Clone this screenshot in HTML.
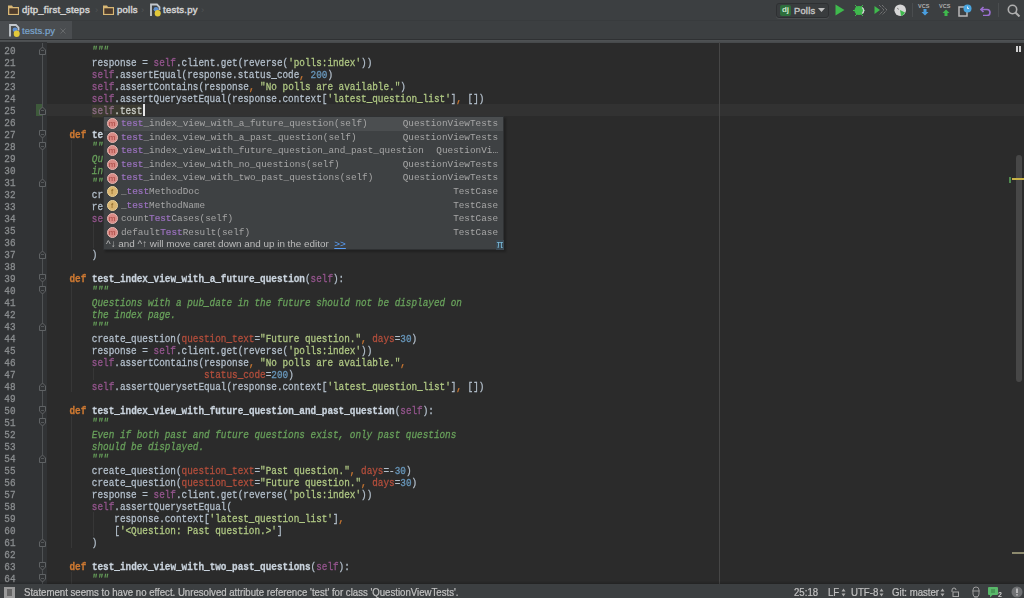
<!DOCTYPE html>
<html><head><meta charset="utf-8">
<style>
*{margin:0;padding:0;box-sizing:border-box}
html,body{width:1024px;height:598px;overflow:hidden;background:#2b2b2b;font-family:"Liberation Sans",sans-serif}
.abs{position:absolute}
#top{position:absolute;left:0;top:0;width:1024px;height:20px;background:#3c3f41}
#topline{position:absolute;left:0;top:20px;width:1024px;height:1px;background:#383b3d}
#tabs{position:absolute;left:0;top:21px;width:1024px;height:19px;background:#3c3f41}
#tabact{position:absolute;left:0;top:21px;width:72px;height:19px;background:#4a4d50}
#tabline1{position:absolute;left:0;top:39px;width:1024px;height:1px;background:#2f3133}
#tabline2{position:absolute;left:0;top:40px;width:1024px;height:3px;background:linear-gradient(#515456,#45484a)}
.bc{position:absolute;top:3px;font-size:9.5px;letter-spacing:0.25px;color:#cfcfcf;line-height:14px;-webkit-text-stroke:0.5px #cfcfcf}
#editor{position:absolute;left:0;top:42px;width:1024px;height:543px;background:#2b2b2b;overflow:hidden}
#gutter{position:absolute;left:0;top:42px;width:47px;height:543px;background:#313335}
#margin{position:absolute;left:719px;top:42px;width:1px;height:543px;background:#464646}
.l{position:absolute;left:47px;height:12px;line-height:12px;font-family:"Liberation Mono",monospace;font-size:9.35px;color:#b3bfcb;white-space:pre;transform:scaleY(1.15);transform-origin:0 8px;-webkit-text-stroke-width:0.25px}
.nm{position:absolute;left:0;width:15.5px;text-align:right;height:12px;line-height:12px;font-family:"Liberation Mono",monospace;font-size:9.35px;color:#8a8d8f;white-space:pre;-webkit-text-stroke:0.25px #8a8d8f;transform:scaleY(1.15);transform-origin:0 8px}
i{font-style:normal}
i.k{color:#cc7832;font-weight:bold}
i.c{color:#cc7832}
i.s{color:#94558d}
i.t{color:#afc783}
i.d{color:#68a05b;font-style:italic}
i.n{color:#6897bb}
i.kw{color:#b24e3c}
i.w{background:#3b3a30;color:#c9ccc6}
i.sw{color:#8d6d86}
i.f{color:#c9d3dd;font-weight:bold}
#curline{position:absolute;left:47px;top:104px;width:977px;height:12px;background:#323232}
#status{position:absolute;left:0;top:584px;width:1024px;height:14px;background:#3c3f41}
.st{position:absolute;top:586.5px;font-size:9.65px;line-height:12px;color:#c0c0c0;transform:scaleY(1.12);transform-origin:0 9px;-webkit-text-stroke:0.2px #c0c0c0}
#popup{position:absolute;left:103px;top:116px;width:401px;height:134px;background:#3e4143;border:1px solid #2f3133;box-shadow:2px 2px 2px rgba(0,0,0,0.25)}
.pr{position:absolute;left:0;width:399px;height:13.6px;font-family:"Liberation Mono",monospace;font-size:9.35px;line-height:13.6px;color:#a6a6a6;white-space:pre}
.pr .ic{position:absolute;left:2.5px;top:1.3px;width:11px;height:11px;border-radius:50%;background:#d98a85;border:1px solid #e9b7b2;color:#a8443f;font-size:8px;line-height:9px;text-align:center;font-family:"Liberation Sans",sans-serif}
.pr .ic.fld{background:#d9b46f;border-color:#ecd39a;color:#8b6424}
.pr .nmx{position:absolute;left:17px}
.pr .ty{position:absolute;right:5px}
.pr b{color:#9c72c0;font-weight:normal;-webkit-text-stroke:0.2px #9c72c0}
#root{position:absolute;left:0;top:0;width:1024px;height:598px;filter:blur(0.35px)}
</style></head><body><div id="root">
<div id="top"></div>
<div id="topline"></div>
<div id="tabs"></div>
<div id="tabact"></div>
<div id="tabline1"></div>
<div id="tabline2"></div>

<!-- breadcrumbs -->
<svg class="abs" style="left:7px;top:4px" width="13" height="12" viewBox="0 0 13 12"><path d="M1 1.5h4l1 1.5h6v8H1z" fill="#d8b775"/><rect x="2.3" y="4.3" width="8.6" height="5.6" fill="#4d3b2c"/></svg>
<div class="bc" style="left:22px">djtp_first_steps</div>
<div class="bc" style="left:95px;color:#505355;-webkit-text-stroke:0;font-weight:normal">&rsaquo;</div>
<svg class="abs" style="left:102px;top:4px" width="13" height="12" viewBox="0 0 13 12"><path d="M1 1.5h4l1 1.5h6v8H1z" fill="#d8b775"/><rect x="2.3" y="4.3" width="8.6" height="5.6" fill="#4d3b2c"/></svg>
<div class="bc" style="left:117px">polls</div>
<div class="bc" style="left:141px;color:#505355;-webkit-text-stroke:0;font-weight:normal">&rsaquo;</div>
<svg class="abs" style="left:149px;top:3px" width="13" height="14" viewBox="0 0 13 14"><path d="M2 13V1.5h6l2.5 2.5v3" fill="none" stroke="#c3c8cd" stroke-width="1.8"/><ellipse cx="7" cy="6.3" rx="2.4" ry="2.2" fill="#5d8fd0"/><ellipse cx="8.7" cy="10.2" rx="3" ry="3.2" fill="#e3c93a"/></svg>
<div class="bc" style="left:163px">tests.py</div>
<div class="bc" style="left:201px;color:#505355;-webkit-text-stroke:0;font-weight:normal">&rsaquo;</div>

<!-- toolbar right -->
<div class="abs" style="left:776px;top:3px;width:53px;height:15px;border:1px solid #2e3032;border-radius:3px;background:#393c3e;box-shadow:0 1px 0 #4b4e50"></div>
<div class="abs" style="left:780px;top:5px;width:11px;height:11px;background:#2e6e3c;border-radius:2px;color:#cfe6cf;font-size:8px;line-height:10px;font-weight:bold;text-align:center">dj</div>
<div class="bc" style="left:794px;top:4px;font-size:9.3px;color:#c4c4c4;-webkit-text-stroke:0.4px #c4c4c4">Polls</div>
<svg class="abs" style="left:818px;top:8px" width="8" height="5"><path d="M0 0h7l-3.5 4z" fill="#c0c0c0"/></svg>
<svg class="abs" style="left:835px;top:4px" width="10" height="12"><path d="M0.5 0.5L9.5 6L0.5 11.5z" fill="#3fb94d"/></svg>
<svg class="abs" style="left:853px;top:4px" width="14" height="13"><circle cx="6" cy="6.5" r="4.5" fill="#3fb94d"/><path d="M2 1l2 2M10 1L8 3M0 6.5h2M10 6.5h2M2 12l2-2M10 12l-2-2" stroke="#3fb94d" stroke-width="1"/><path d="M9 3.5a3.5 3.5 0 0 1 0 6" stroke="#d0d0d0" stroke-width="1.4" fill="none"/></svg>
<svg class="abs" style="left:874px;top:4px" width="13" height="12"><path d="M0.5 2L6 6L0.5 10z" fill="#3fb94d"/><path d="M5 1l5 5l-5 5M8 1l5 5l-5 5" stroke="#8a8a8a" stroke-width="1" fill="none" stroke-dasharray="1 1"/></svg>
<svg class="abs" style="left:894px;top:4px" width="13" height="13"><circle cx="6.2" cy="6.2" r="5.8" fill="#d6d6d6"/><path d="M6 6l5 2.5a5.8 5.8 0 0 1-4 3.5z" fill="#3fb94d"/><path d="M3 4l2 1.5" stroke="#888" stroke-width="1"/></svg>
<div class="abs" style="left:912px;top:3px;width:1px;height:14px;background:#4a4d4f"></div>
<div class="abs" style="left:918px;top:3px;font-size:5.5px;font-weight:bold;color:#b0b0b0;line-height:6px">VCS</div>
<svg class="abs" style="left:921px;top:9px" width="8" height="7"><path d="M2.5 0h3v3h2l-3.5 3.5l-3.5-3.5h2z" fill="#4a9fe0"/></svg>
<div class="abs" style="left:939px;top:3px;font-size:5.5px;font-weight:bold;color:#b0b0b0;line-height:6px">VCS</div>
<svg class="abs" style="left:942px;top:9px" width="8" height="7"><path d="M2.5 7h3v-3h2l-3.5-3.5l-3.5 3.5h2z" fill="#3fb94d"/></svg>
<svg class="abs" style="left:958px;top:4px" width="14" height="13"><rect x="1" y="3" width="8" height="9" fill="none" stroke="#b8b8b8" stroke-width="1.5"/><circle cx="9.5" cy="4.5" r="4" fill="#4aa6e0"/><path d="M9.5 2.5v2h1.5" stroke="#fff" stroke-width="0.8" fill="none"/></svg>
<svg class="abs" style="left:980px;top:6px" width="12" height="10"><path d="M3.5 1L1 3.5l2.5 2.5" stroke="#9b6fd0" stroke-width="1.6" fill="none"/><path d="M1.5 3.5H7a3 3 0 0 1 0 6H3" stroke="#9b6fd0" stroke-width="1.6" fill="none"/></svg>
<div class="abs" style="left:998px;top:3px;width:1px;height:14px;background:#4a4d4f"></div>
<svg class="abs" style="left:1007px;top:4px" width="14" height="13"><circle cx="5.5" cy="5.5" r="4.2" stroke="#b0b0b0" stroke-width="1.6" fill="none"/><path d="M8.5 8.5l4 4" stroke="#b0b0b0" stroke-width="2"/></svg>

<!-- tab -->
<svg class="abs" style="left:8px;top:23px" width="13" height="15" viewBox="0 0 13 14"><path d="M2 13V1.5h6l2.5 2.5v3" fill="none" stroke="#c3c8cd" stroke-width="1.8"/><ellipse cx="7" cy="6.3" rx="2.4" ry="2.2" fill="#5d8fd0"/><ellipse cx="8.7" cy="10.2" rx="3" ry="3.2" fill="#e3c93a"/></svg>
<div class="abs" style="left:22px;top:23.5px;font-size:9.5px;letter-spacing:0.05px;line-height:14px;color:#7ba6cf;-webkit-text-stroke:0.2px #7ba6cf">tests.py</div>
<svg class="abs" style="left:60px;top:28px" width="6" height="6"><path d="M0.5 0.5l5 5M5.5 0.5l-5 5" stroke="#66696b" stroke-width="1"/></svg>

<!-- editor -->
<div id="gutter"></div>
<div id="curline"></div>

<div id="margin"></div>
<div class="abs" style="left:36px;top:104px;width:6px;height:12px;background:#3e5a3b"></div>
<div class="abs" style="left:42px;top:43px;width:1px;height:542px;background:#4f5254"></div>
<div class="abs" style="left:71px;top:140px;width:1px;height:120px;background:#373737"></div>
<div class="abs" style="left:71px;top:284px;width:1px;height:108px;background:#373737"></div>
<div class="abs" style="left:71px;top:416px;width:1px;height:132px;background:#373737"></div>
<div class="abs" style="left:71px;top:572px;width:1px;height:12px;background:#373737"></div>
<div class="abs" style="left:93px;top:224px;width:1px;height:24px;background:#373737"></div>
<div class="abs" style="left:93px;top:368px;width:1px;height:12px;background:#373737"></div>
<div class="abs" style="left:93px;top:512px;width:1px;height:24px;background:#373737"></div>
<svg class="abs" style="left:37px;top:44px" width="10" height="12"><path d="M2.5 10.5h6v-4.5l-3-3l-3 3z" fill="#313335" stroke="#5f6264" stroke-width="1"/><path d="M4 6.5h3" stroke="#55585a" stroke-width="1"/></svg>
<svg class="abs" style="left:37px;top:104px" width="10" height="12"><path d="M2.5 10.5h6v-4.5l-3-3l-3 3z" fill="#313335" stroke="#5f6264" stroke-width="1"/><path d="M4 6.5h3" stroke="#55585a" stroke-width="1"/></svg>
<svg class="abs" style="left:37px;top:128px" width="10" height="12"><path d="M2.5 2.5h6v4.5l-3 3l-3-3z" fill="#313335" stroke="#5f6264" stroke-width="1"/><path d="M4 6.5h3" stroke="#55585a" stroke-width="1"/></svg>
<svg class="abs" style="left:37px;top:140px" width="10" height="12"><path d="M2.5 2.5h6v4.5l-3 3l-3-3z" fill="#313335" stroke="#5f6264" stroke-width="1"/><path d="M4 6.5h3" stroke="#55585a" stroke-width="1"/></svg>
<svg class="abs" style="left:37px;top:176px" width="10" height="12"><path d="M2.5 10.5h6v-4.5l-3-3l-3 3z" fill="#313335" stroke="#5f6264" stroke-width="1"/><path d="M4 6.5h3" stroke="#55585a" stroke-width="1"/></svg>
<svg class="abs" style="left:37px;top:248px" width="10" height="12"><path d="M2.5 10.5h6v-4.5l-3-3l-3 3z" fill="#313335" stroke="#5f6264" stroke-width="1"/><path d="M4 6.5h3" stroke="#55585a" stroke-width="1"/></svg>
<svg class="abs" style="left:37px;top:272px" width="10" height="12"><path d="M2.5 2.5h6v4.5l-3 3l-3-3z" fill="#313335" stroke="#5f6264" stroke-width="1"/><path d="M4 6.5h3" stroke="#55585a" stroke-width="1"/></svg>
<svg class="abs" style="left:37px;top:284px" width="10" height="12"><path d="M2.5 2.5h6v4.5l-3 3l-3-3z" fill="#313335" stroke="#5f6264" stroke-width="1"/><path d="M4 6.5h3" stroke="#55585a" stroke-width="1"/></svg>
<svg class="abs" style="left:37px;top:320px" width="10" height="12"><path d="M2.5 10.5h6v-4.5l-3-3l-3 3z" fill="#313335" stroke="#5f6264" stroke-width="1"/><path d="M4 6.5h3" stroke="#55585a" stroke-width="1"/></svg>
<svg class="abs" style="left:37px;top:380px" width="10" height="12"><path d="M2.5 10.5h6v-4.5l-3-3l-3 3z" fill="#313335" stroke="#5f6264" stroke-width="1"/><path d="M4 6.5h3" stroke="#55585a" stroke-width="1"/></svg>
<svg class="abs" style="left:37px;top:404px" width="10" height="12"><path d="M2.5 2.5h6v4.5l-3 3l-3-3z" fill="#313335" stroke="#5f6264" stroke-width="1"/><path d="M4 6.5h3" stroke="#55585a" stroke-width="1"/></svg>
<svg class="abs" style="left:37px;top:416px" width="10" height="12"><path d="M2.5 2.5h6v4.5l-3 3l-3-3z" fill="#313335" stroke="#5f6264" stroke-width="1"/><path d="M4 6.5h3" stroke="#55585a" stroke-width="1"/></svg>
<svg class="abs" style="left:37px;top:452px" width="10" height="12"><path d="M2.5 10.5h6v-4.5l-3-3l-3 3z" fill="#313335" stroke="#5f6264" stroke-width="1"/><path d="M4 6.5h3" stroke="#55585a" stroke-width="1"/></svg>
<svg class="abs" style="left:37px;top:536px" width="10" height="12"><path d="M2.5 10.5h6v-4.5l-3-3l-3 3z" fill="#313335" stroke="#5f6264" stroke-width="1"/><path d="M4 6.5h3" stroke="#55585a" stroke-width="1"/></svg>
<svg class="abs" style="left:37px;top:560px" width="10" height="12"><path d="M2.5 2.5h6v4.5l-3 3l-3-3z" fill="#313335" stroke="#5f6264" stroke-width="1"/><path d="M4 6.5h3" stroke="#55585a" stroke-width="1"/></svg>
<svg class="abs" style="left:37px;top:572px" width="10" height="12"><path d="M2.5 2.5h6v4.5l-3 3l-3-3z" fill="#313335" stroke="#5f6264" stroke-width="1"/><path d="M4 6.5h3" stroke="#55585a" stroke-width="1"/></svg>
<div class="nm" style="top:46px">20</div>
<div class="nm" style="top:58px">21</div>
<div class="nm" style="top:70px">22</div>
<div class="nm" style="top:82px">23</div>
<div class="nm" style="top:94px">24</div>
<div class="nm" style="top:106px">25</div>
<div class="nm" style="top:118px">26</div>
<div class="nm" style="top:130px">27</div>
<div class="nm" style="top:142px">28</div>
<div class="nm" style="top:154px">29</div>
<div class="nm" style="top:166px">30</div>
<div class="nm" style="top:178px">31</div>
<div class="nm" style="top:190px">32</div>
<div class="nm" style="top:202px">33</div>
<div class="nm" style="top:214px">34</div>
<div class="nm" style="top:226px">35</div>
<div class="nm" style="top:238px">36</div>
<div class="nm" style="top:250px">37</div>
<div class="nm" style="top:262px">38</div>
<div class="nm" style="top:274px">39</div>
<div class="nm" style="top:286px">40</div>
<div class="nm" style="top:298px">41</div>
<div class="nm" style="top:310px">42</div>
<div class="nm" style="top:322px">43</div>
<div class="nm" style="top:334px">44</div>
<div class="nm" style="top:346px">45</div>
<div class="nm" style="top:358px">46</div>
<div class="nm" style="top:370px">47</div>
<div class="nm" style="top:382px">48</div>
<div class="nm" style="top:394px">49</div>
<div class="nm" style="top:406px">50</div>
<div class="nm" style="top:418px">51</div>
<div class="nm" style="top:430px">52</div>
<div class="nm" style="top:442px">53</div>
<div class="nm" style="top:454px">54</div>
<div class="nm" style="top:466px">55</div>
<div class="nm" style="top:478px">56</div>
<div class="nm" style="top:490px">57</div>
<div class="nm" style="top:502px">58</div>
<div class="nm" style="top:514px">59</div>
<div class="nm" style="top:526px">60</div>
<div class="nm" style="top:538px">61</div>
<div class="nm" style="top:550px">62</div>
<div class="nm" style="top:562px">63</div>
<div class="nm" style="top:574px">64</div>
<div class="l" style="top:46px">        <i class="d">"""</i></div>
<div class="l" style="top:58px">        response = <i class="s">self</i>.client.get(reverse(<i class="t">'polls:index'</i>))</div>
<div class="l" style="top:70px">        <i class="s">self</i>.assertEqual(response.status_code<i class="c">,</i> <i class="n">200</i>)</div>
<div class="l" style="top:82px">        <i class="s">self</i>.assertContains(response<i class="c">,</i> <i class="t">"No polls are available."</i>)</div>
<div class="l" style="top:94px">        <i class="s">self</i>.assertQuerysetEqual(response.context[<i class="t">'latest_question_list'</i>]<i class="c">,</i> [])</div>
<div class="l" style="top:106px">        <i class="w"><i class="sw">self</i>.test</i></div>
<div class="l" style="top:118px"></div>
<div class="l" style="top:130px">    <i class="k">def</i> <i class="f">test_index_view_with_a_past_question</i>(<i class="s">self</i>):</div>
<div class="l" style="top:142px">        <i class="d">"""</i></div>
<div class="l" style="top:154px">        <i class="d">Questions with a pub_date in the past should be displayed on the</i></div>
<div class="l" style="top:166px">        <i class="d">index page.</i></div>
<div class="l" style="top:178px">        <i class="d">"""</i></div>
<div class="l" style="top:190px">        create_question(<i class="kw">question_text</i>=<i class="t">"Past question."</i><i class="c">,</i> <i class="kw">days</i>=-<i class="n">30</i>)</div>
<div class="l" style="top:202px">        response = <i class="s">self</i>.client.get(reverse(<i class="t">'polls:index'</i>))</div>
<div class="l" style="top:214px">        <i class="s">self</i>.assertQuerysetEqual(</div>
<div class="l" style="top:226px">            response.context[<i class="t">'latest_question_list'</i>]<i class="c">,</i></div>
<div class="l" style="top:238px">            [<i class="t">'&lt;Question: Past question.&gt;'</i>]</div>
<div class="l" style="top:250px">        )</div>
<div class="l" style="top:262px"></div>
<div class="l" style="top:274px">    <i class="k">def</i> <i class="f">test_index_view_with_a_future_question</i>(<i class="s">self</i>):</div>
<div class="l" style="top:286px">        <i class="d">"""</i></div>
<div class="l" style="top:298px">        <i class="d">Questions with a pub_date in the future should not be displayed on</i></div>
<div class="l" style="top:310px">        <i class="d">the index page.</i></div>
<div class="l" style="top:322px">        <i class="d">"""</i></div>
<div class="l" style="top:334px">        create_question(<i class="kw">question_text</i>=<i class="t">"Future question."</i><i class="c">,</i> <i class="kw">days</i>=<i class="n">30</i>)</div>
<div class="l" style="top:346px">        response = <i class="s">self</i>.client.get(reverse(<i class="t">'polls:index'</i>))</div>
<div class="l" style="top:358px">        <i class="s">self</i>.assertContains(response<i class="c">,</i> <i class="t">"No polls are available."</i><i class="c">,</i></div>
<div class="l" style="top:370px">                            <i class="kw">status_code</i>=<i class="n">200</i>)</div>
<div class="l" style="top:382px">        <i class="s">self</i>.assertQuerysetEqual(response.context[<i class="t">'latest_question_list'</i>]<i class="c">,</i> [])</div>
<div class="l" style="top:394px"></div>
<div class="l" style="top:406px">    <i class="k">def</i> <i class="f">test_index_view_with_future_question_and_past_question</i>(<i class="s">self</i>):</div>
<div class="l" style="top:418px">        <i class="d">"""</i></div>
<div class="l" style="top:430px">        <i class="d">Even if both past and future questions exist, only past questions</i></div>
<div class="l" style="top:442px">        <i class="d">should be displayed.</i></div>
<div class="l" style="top:454px">        <i class="d">"""</i></div>
<div class="l" style="top:466px">        create_question(<i class="kw">question_text</i>=<i class="t">"Past question."</i><i class="c">,</i> <i class="kw">days</i>=-<i class="n">30</i>)</div>
<div class="l" style="top:478px">        create_question(<i class="kw">question_text</i>=<i class="t">"Future question."</i><i class="c">,</i> <i class="kw">days</i>=<i class="n">30</i>)</div>
<div class="l" style="top:490px">        response = <i class="s">self</i>.client.get(reverse(<i class="t">'polls:index'</i>))</div>
<div class="l" style="top:502px">        <i class="s">self</i>.assertQuerysetEqual(</div>
<div class="l" style="top:514px">            response.context[<i class="t">'latest_question_list'</i>]<i class="c">,</i></div>
<div class="l" style="top:526px">            [<i class="t">'&lt;Question: Past question.&gt;'</i>]</div>
<div class="l" style="top:538px">        )</div>
<div class="l" style="top:550px"></div>
<div class="l" style="top:562px">    <i class="k">def</i> <i class="f">test_index_view_with_two_past_questions</i>(<i class="s">self</i>):</div>
<div class="l" style="top:574px">        <i class="d">"""</i></div>

<div class="abs" style="left:143px;top:104px;width:1.5px;height:12px;background:#e6e6e6"></div>
<!-- popup -->
<div id="popup">
<div class="pr" style="top:0;background:#4b4e50"><span class="ic">m</span><span class="nmx"><b>test</b>_index_view_with_a_future_question(self)</span><span class="ty">QuestionViewTests</span></div>
<div class="pr" style="top:13.6px"><span class="ic">m</span><span class="nmx"><b>test</b>_index_view_with_a_past_question(self)</span><span class="ty">QuestionViewTests</span></div>
<div class="pr" style="top:27.2px"><span class="ic">m</span><span class="nmx"><b>test</b>_index_view_with_future_question_and_past_question</span><span class="ty">QuestionVi&hellip;</span></div>
<div class="pr" style="top:40.8px"><span class="ic">m</span><span class="nmx"><b>test</b>_index_view_with_no_questions(self)</span><span class="ty">QuestionViewTests</span></div>
<div class="pr" style="top:54.4px"><span class="ic">m</span><span class="nmx"><b>test</b>_index_view_with_two_past_questions(self)</span><span class="ty">QuestionViewTests</span></div>
<div class="pr" style="top:68px"><span class="ic fld">f</span><span class="nmx">_<b>test</b>MethodDoc</span><span class="ty">TestCase</span></div>
<div class="pr" style="top:81.6px"><span class="ic fld">f</span><span class="nmx">_<b>test</b>MethodName</span><span class="ty">TestCase</span></div>
<div class="pr" style="top:95.2px"><span class="ic">m</span><span class="nmx">count<b>Test</b>Cases(self)</span><span class="ty">TestCase</span></div>
<div class="pr" style="top:108.8px"><span class="ic">m</span><span class="nmx">default<b>Test</b>Result(self)</span><span class="ty">TestCase</span></div>
<div class="abs" style="left:2px;top:121px;font-size:9.9px;line-height:12px;color:#bbbbbb;white-space:pre">^&darr; and ^&uarr; will move caret down and up in the editor  <span style="color:#589df6;text-decoration:underline">&gt;&gt;</span></div>
<div class="abs" style="left:392px;top:123px;width:8px;height:10px;font-size:10px;line-height:10px;color:#78b8d8;background:#3a4852;text-align:center">&pi;</div>
</div>

<!-- scrollbar -->
<div class="abs" style="left:1016px;top:46px;width:2px;height:6px;background:#d0d0d0"></div>
<div class="abs" style="left:1019px;top:46px;width:2px;height:6px;background:#d0d0d0"></div>
<div class="abs" style="left:1016px;top:155px;width:6px;height:227px;background:#474747;border-radius:3px"></div>
<div class="abs" style="left:1012px;top:178px;width:12px;height:2px;background:#c9b347"></div>
<div class="abs" style="left:1009px;top:177px;width:2px;height:6px;background:#4f8a4f"></div>
<div class="abs" style="left:1012px;top:552px;width:12px;height:2px;background:#8d8a6e"></div>

<!-- status -->
<div class="abs" style="left:0;top:581px;width:1024px;height:3px;background:linear-gradient(rgba(0,0,0,0),rgba(0,0,0,0.18))"></div>
<div id="status"></div>
<div class="abs" style="left:4px;top:587px;width:11px;height:11px;background:#9a9a9a"></div>
<div class="abs" style="left:7px;top:589px;width:5px;height:7px;background:#666"></div>
<div class="st" style="left:24px">Statement seems to have no effect. Unresolved attribute reference 'test' for class 'QuestionViewTests'.</div>
<div class="st" style="left:794px">25:18</div>
<div class="st" style="left:828px">LF</div><svg class="abs" style="left:841px;top:588px" width="5" height="9"><path d="M0.5 3.5L2.5 0.5L4.5 3.5zM0.5 5.5L2.5 8.5L4.5 5.5z" fill="#aaaaaa"/></svg>
<div class="st" style="left:851px">UTF-8</div><svg class="abs" style="left:879px;top:588px" width="5" height="9"><path d="M0.5 3.5L2.5 0.5L4.5 3.5zM0.5 5.5L2.5 8.5L4.5 5.5z" fill="#aaaaaa"/></svg>
<div class="st" style="left:892px">Git: master</div><svg class="abs" style="left:940px;top:588px" width="5" height="9"><path d="M0.5 3.5L2.5 0.5L4.5 3.5zM0.5 5.5L2.5 8.5L4.5 5.5z" fill="#aaaaaa"/></svg>
<svg class="abs" style="left:950px;top:587px" width="9" height="10"><path d="M2 5V3a2 2 0 0 1 4 0" stroke="#a8a8a8" stroke-width="1" fill="none"/><rect x="3" y="5" width="5.5" height="4.5" fill="none" stroke="#a8a8a8" stroke-width="1"/></svg>
<svg class="abs" style="left:971px;top:586px" width="10" height="12"><path d="M2 4a3 3 0 0 1 6 0v4a3 3 0 0 1-6 0z" fill="none" stroke="#9a9a9a" stroke-width="1"/><path d="M1.5 5h7" stroke="#9a9a9a" stroke-width="1"/><path d="M3 11h4" stroke="#9a9a9a" stroke-width="1"/></svg>
<svg class="abs" style="left:987px;top:586px" width="14" height="12"><rect x="1" y="1" width="10" height="8" rx="1" fill="#59b86a"/><path d="M3 9v2.5l2.5-2.5" fill="#59b86a"/><path d="M5 3v4M7 3v4" stroke="#2d6a38" stroke-width="0.8"/></svg>
<div class="abs" style="left:998px;top:591px;font-size:7px;line-height:8px;color:#d0d0d0;font-weight:bold">2</div>
<svg class="abs" style="left:1011px;top:586px" width="12" height="12"><circle cx="6" cy="6" r="5.5" fill="#6f7173"/><path d="M6 2.5v4.5M6 8.3v1.2" stroke="#d8d8d8" stroke-width="1.4"/></svg>
</div></body></html>
